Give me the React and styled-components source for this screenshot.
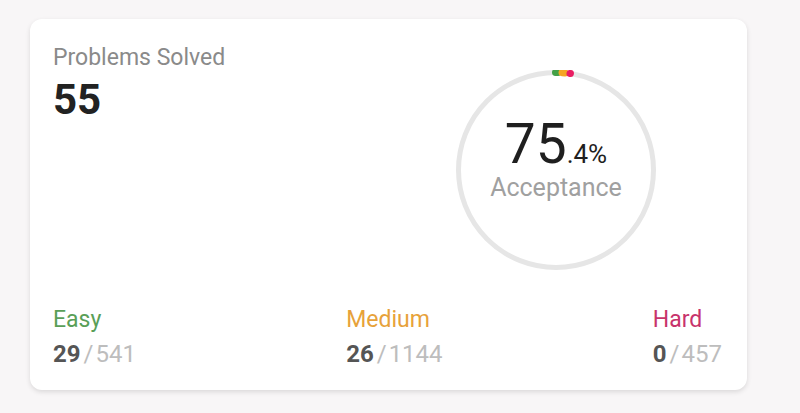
import React from "react";
import styled, { createGlobalStyle } from "styled-components";

const GlobalStyle = createGlobalStyle`
  html, body {
    margin: 0;
    padding: 0;
    background: #f8f6f7;
    font-family: Roboto, "Noto Sans", Arial, sans-serif;
  }
`;

const Page = styled.div`
  width: 800px;
  height: 413px;
  padding: 19px 0 0 30px;
  box-sizing: border-box;
`;

const Card = styled.div`
  width: 717px;
  height: 371px;
  box-sizing: border-box;
  background: #fff;
  border-radius: 12px;
  box-shadow: 0 2px 5px rgba(0, 0, 0, 0.12);
  padding: 25px 25px 0 23px;
  display: flex;
  flex-direction: column;
`;

const TopRow = styled.div`
  display: flex;
  justify-content: space-between;
  align-items: flex-start;
`;

const Label = styled.div`
  font-size: 23px;
  line-height: 28px;
  color: #8a8a8a;
`;

const Total = styled.div`
  font-size: 42px;
  font-weight: 700;
  line-height: 48px;
  margin-top: 4px;
  color: #222;
`;

const Ring = styled.div`
  position: relative;
  width: 200px;
  height: 200px;
  margin: 26px 66px 0 0;
`;

const RingText = styled.div`
  position: absolute;
  inset: 0;
  padding-bottom: 22px;
  display: flex;
  flex-direction: column;
  align-items: center;
  justify-content: center;
`;

const Rate = styled.div`
  font-size: 55px;
  line-height: 56px;
  color: #1f1f1f;
  span {
    font-size: 26px;
  }
`;

const RateLabel = styled.div`
  font-size: 25px;
  line-height: 30px;
  margin-top: -9px;
  color: #a0a0a0;
`;

const BottomRow = styled.div`
  display: flex;
  justify-content: space-between;
  margin-top: 36px;
`;

const Level = styled.div`
  font-size: 23px;
  line-height: 28px;
  color: ${(p) => p.$color};
`;

const Count = styled.div`
  font-size: 24px;
  line-height: 28px;
  margin-top: 6px;
  color: #bdbdbd;
  b {
    color: #555;
    font-weight: 700;
  }
  i {
    font-style: normal;
    margin: 0 2px 0 3px;
  }
`;

const levels = [
  { name: "Easy", color: "#5a9f58", solved: 29, total: 541 },
  { name: "Medium", color: "#e7a23a", solved: 26, total: 1144 },
  { name: "Hard", color: "#c8336b", solved: 0, total: 457 },
];

const R = 97.5;
const arc = (x0, x1) => {
  const p = (dx) => {
    const a = dx / R;
    return [100 + R * Math.sin(a), 100 - R * Math.cos(a)];
  };
  const [ax, ay] = p(x0);
  const [bx, by] = p(x1);
  return `M${ax} ${ay} A${R} ${R} 0 0 1 ${bx} ${by}`;
};

const App = () => (
  <Page>
    <GlobalStyle />
    <Card>
      <TopRow>
        <div>
          <Label>Problems Solved</Label>
          <Total>55</Total>
        </div>
        <Ring>
          <svg width="200" height="200" viewBox="0 0 200 200">
            <circle cx="100" cy="100" r={R} fill="none" stroke="#e6e6e6" strokeWidth="5" />
            <path d={arc(-0.5, 2)} stroke="#43a047" strokeWidth="7" strokeLinecap="round" fill="none" />
            <path d={arc(6, 9)} stroke="#f5a623" strokeWidth="7" strokeLinecap="round" fill="none" />
            <path d={arc(14, 14.5)} stroke="#e91e63" strokeWidth="7" strokeLinecap="round" fill="none" />
          </svg>
          <RingText>
            <Rate>
              75<span>.4%</span>
            </Rate>
            <RateLabel>Acceptance</RateLabel>
          </RingText>
        </Ring>
      </TopRow>
      <BottomRow>
        {levels.map((l) => (
          <div key={l.name}>
            <Level $color={l.color}>{l.name}</Level>
            <Count>
              <b>{l.solved}</b>
              <i>/</i>
              {l.total}
            </Count>
          </div>
        ))}
      </BottomRow>
    </Card>
  </Page>
);

export default App;
